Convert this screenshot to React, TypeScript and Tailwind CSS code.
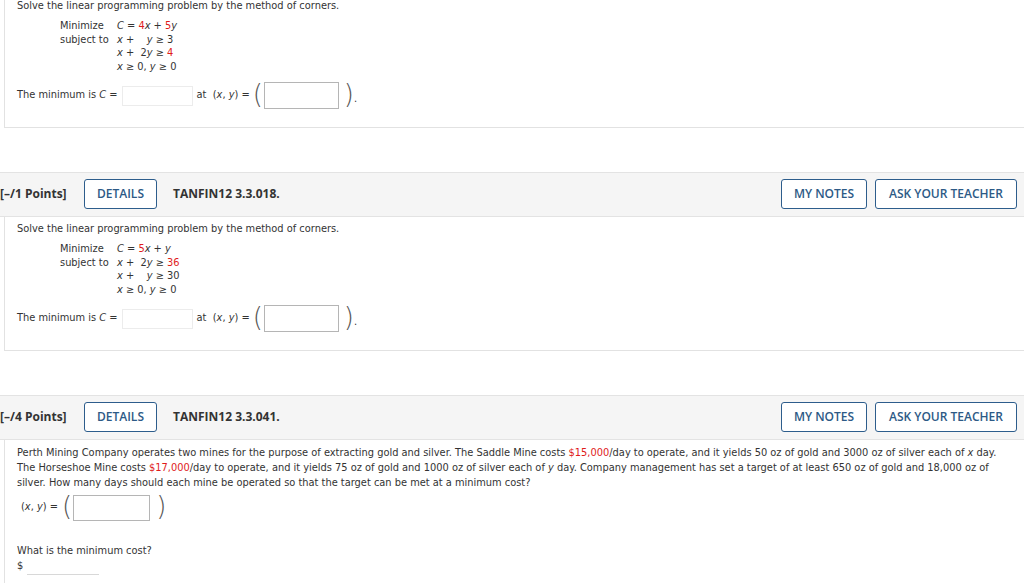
import React from "react";

const body = { fontFamily: '"DejaVu Sans", Verdana, sans-serif' };
const head = { fontFamily: '"Open Sans", "Noto Sans", sans-serif' };

const R = ({ children }: { children: React.ReactNode }) => (
  <span className="text-[#e01b1b]">{children}</span>
);
const V = ({ children }: { children: React.ReactNode }) => <i>{children}</i>;

function Btn({ children, w }: { children: React.ReactNode; w: string }) {
  return (
    <div
      className={`h-[30px] ${w} flex items-center justify-center rounded-[3px] border border-[#2d5d8c] bg-white text-[12px] font-semibold text-[#2d5a86]`}
    >
      {children}
    </div>
  );
}

function Header({ pts, code }: { pts: string; code: string }) {
  return (
    <div
      style={head}
      className="h-[45px] flex items-center bg-[#f5f5f5] border-y border-[#e3e3e3] pr-[7px]"
    >
      <span className="text-[12px] font-bold text-[#333] w-[84px]">[–/{pts} Points]</span>
      <Btn w="w-[73px]">DETAILS</Btn>
      <span className="ml-[16px] text-[12px] font-bold text-[#333]">{code}</span>
      <div className="ml-auto flex gap-[8px]">
        <Btn w="w-[86px]">MY NOTES</Btn>
        <Btn w="w-[142px]">ASK YOUR TEACHER</Btn>
      </div>
    </div>
  );
}

function CornerProblem({
  obj,
  rows,
}: {
  obj: React.ReactNode;
  rows: React.ReactNode[];
}) {
  return (
    <div
      style={body}
      className="ml-[4px] border-l border-b border-[#e2e2e2] pl-[12px] pt-[4px] pb-[17px] text-[9.85px] text-[#333]"
    >
      <div className="leading-[15px]">Solve the linear programming problem by the method of corners.</div>
      <div className="mt-[6px] ml-[43px] grid grid-cols-[57px_auto] leading-[13.7px]">
        <div>Minimize</div>
        <div>{obj}</div>
        <div>subject to</div>
        <div>{rows[0]}</div>
        <div></div>
        <div>{rows[1]}</div>
        <div></div>
        <div>
          <V>x</V> ≥ 0, <V>y</V> ≥ 0
        </div>
      </div>
      <div className="mt-[8px] flex items-center h-[28px]">
        <span>
          The minimum is <V>C</V> =
        </span>
        <div className="ml-[4px] w-[71px] h-[20px] border border-[#ececec] bg-white"></div>
        <span className="ml-[4px]">
          at&nbsp; (<V>x</V>, <V>y</V>) =
        </span>
        <span className="ml-[3px] text-[26px] leading-none text-[#555] -mt-[3px]" style={{ fontWeight: 200 }}>(</span>
        <div className="ml-[1px] w-[75px] h-[27px] border border-[#b5b5b5] bg-white"></div>
        <span className="ml-[5px] text-[26px] leading-none text-[#555] -mt-[3px]" style={{ fontWeight: 200 }}>)</span>
        <span className="mt-[8px]">.</span>
      </div>
    </div>
  );
}

export default function App() {
  return (
    <div className="w-[1024px] h-[583px] overflow-hidden bg-white">
      <div className="-mt-[6px]">
        <CornerProblem
          obj={
            <>
              <V>C</V> = <R>4</R>
              <V>x</V> + <R>5</R>
              <V>y</V>
            </>
          }
          rows={[
            <>
              <V>x</V> + &nbsp;&nbsp;&nbsp;<V>y</V> ≥ 3
            </>,
            <>
              <V>x</V> + &nbsp;2<V>y</V> ≥ <R>4</R>
            </>,
          ]}
        />
      </div>
      <div className="mt-[44px]">
        <Header pts="1" code="TANFIN12 3.3.018." />
        <CornerProblem
          obj={
            <>
              <V>C</V> = <R>5</R>
              <V>x</V> + <V>y</V>
            </>
          }
          rows={[
            <>
              <V>x</V> + &nbsp;2<V>y</V> ≥ <R>36</R>
            </>,
            <>
              <V>x</V> + &nbsp;&nbsp;&nbsp;<V>y</V> ≥ 30
            </>,
          ]}
        />
      </div>
      <div className="mt-[44px]">
        <Header pts="4" code="TANFIN12 3.3.041." />
        <div
          style={body}
          className="ml-[4px] border-l border-[#e2e2e2] pl-[12px] pt-[5px] pb-[30px] text-[9.85px] text-[#333]"
        >
          <div className="leading-[15px] whitespace-nowrap">
            Perth Mining Company operates two mines for the purpose of extracting gold and silver. The Saddle Mine costs{" "}
            <R>$15,000</R>/day to operate, and it yields 50 oz of gold and 3000 oz of silver each of <V>x</V> day.
            <br />
            The Horseshoe Mine costs <R>$17,000</R>/day to operate, and it yields 75 oz of gold and 1000 oz of silver each
            of <V>y</V> day. Company management has set a target of at least 650 oz of gold and 18,000 oz of
            <br />
            silver. How many days should each mine be operated so that the target can be met at a minimum cost?
          </div>
          <div className="mt-[4px] ml-[4px] flex items-center h-[28px]">
            <span>
              (<V>x</V>, <V>y</V>) =
            </span>
            <span className="ml-[4px] text-[26px] leading-none text-[#555] -mt-[3px]" style={{ fontWeight: 200 }}>(</span>
            <div className="ml-[1px] w-[77px] h-[26px] border border-[#b5b5b5] bg-white"></div>
            <span className="ml-[6px] text-[26px] leading-none text-[#555] -mt-[3px]" style={{ fontWeight: 200 }}>)</span>
          </div>
          <div className="mt-[21px] leading-[15px]">What is the minimum cost?</div>
          <div className="flex items-end leading-[15px]">
            <span>$</span>
            <div className="ml-[4px] mb-[-2px] w-[72px] h-[14px] border-b border-[#d8d8d8]"></div>
          </div>
        </div>
      </div>
    </div>
  );
}
